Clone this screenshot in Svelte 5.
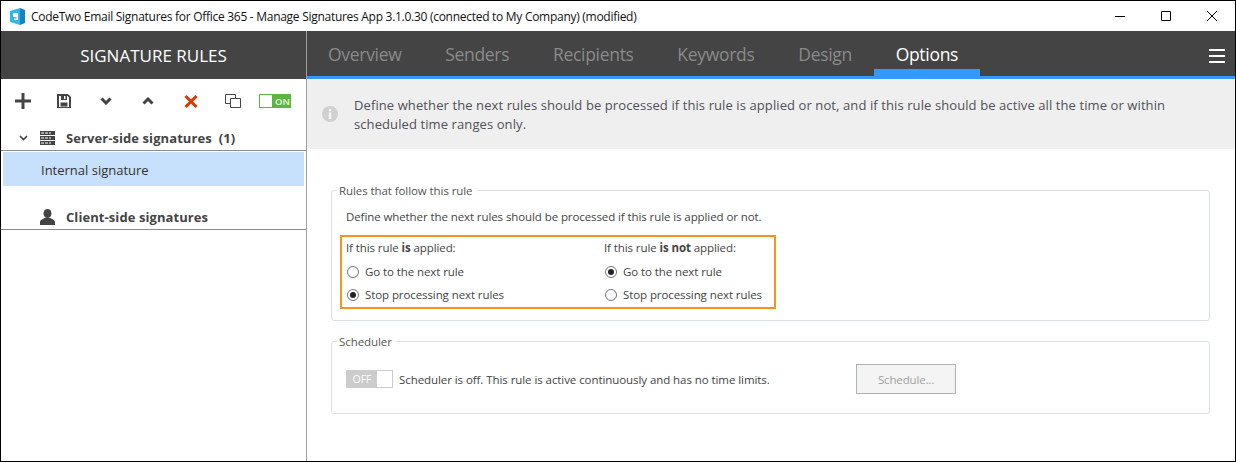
<script>
  const tabs = ['Overview', 'Senders', 'Recipients', 'Keywords', 'Design', 'Options'];
</script>

<div class="window">
  <header class="titlebar">
    <svg class="logo" width="15" height="17" viewBox="0 0 15 17">
      <path d="M0 3L10 0V17L0 14z" fill="#2fb6ea"/>
      <path d="M10 0L15 2V15L10 17z" fill="#1583bd"/>
      <path d="M3 5h5v7H4v-1.500h2.500V9H3z" fill="#fff"/>
    </svg>
    <span class="title">CodeTwo Email Signatures for Office 365 - Manage Signatures App 3.1.0.30 (connected to My Company) (modified)</span>
    <div class="winbtns">
      <svg width="12" height="12" viewBox="0 0 12 12"><path d="M1 6.500h10" stroke="#000" fill="none"/></svg>
      <svg width="12" height="12" viewBox="0 0 12 12"><path d="M1.500 1.500h9v9h-9z" stroke="#000" fill="none"/></svg>
      <svg width="12" height="12" viewBox="0 0 12 12"><path d="M1 1l10 10M11 1L1 11" stroke="#000" fill="none"/></svg>
    </div>
  </header>

  <div class="body">
    <aside class="side">
      <div class="side-head">SIGNATURE RULES</div>
      <div class="toolbar">
        <svg width="16" height="16" viewBox="0 0 16 16"><path d="M6.500 0h3v6.500h6.500v3H9.500V16h-3V9.500H0v-3h6.500z" fill="#444"/></svg>
        <svg width="14" height="14" viewBox="0 0 14 14"><path d="M0 0h11l3 3v11H0zM2 2v11h10V3.500L10.500 2H10v4H4V2zM7 2v3h1.500V2zM3.500 8.500v4h7v-4z" fill="#444" fill-rule="evenodd"/></svg>
        <svg width="12" height="8" viewBox="0 0 12 8"><path d="M1.500 1.500L6 6l4.500-4.500" stroke="#444" stroke-width="3" fill="none"/></svg>
        <svg width="12" height="8" viewBox="0 0 12 8"><path d="M1.500 6.500L6 2l4.500 4.500" stroke="#444" stroke-width="3" fill="none"/></svg>
        <svg width="14" height="13" viewBox="0 0 14 13"><path d="M1.500 1l11 11M12.500 1l-11 11" stroke="#d83b01" stroke-width="3" fill="none"/></svg>
        <svg width="16" height="14" viewBox="0 0 16 14"><path d="M.5.500h10v9H.5z" stroke="#444" fill="#fff"/><path d="M5.500 4.500h10v9h-10z" stroke="#444" fill="#fff"/></svg>
        <div class="on"><span class="knob"></span><span class="on-label">ON</span></div>
      </div>

      <div class="tree-head first">
        <svg class="chev" width="9" height="6" viewBox="0 0 9 6"><path d="M1 1l3.500 3.500L8 1" stroke="#444" stroke-width="1.600" fill="none"/></svg>
        <svg class="ticon" width="15" height="14" viewBox="0 0 15 14"><path d="M0 0h15v4H0zM0 5h15v4H0zM0 10h15v4H0z" fill="#444"/><path d="M1 1.500h3v1H1zM5 1.500h3v1H5zM9 1.500h2v1H9zM1 6.500h3v1H1zM5 6.500h3v1H5zM9 6.500h2v1H9zM1 11.500h3v1H1zM5 11.500h3v1H5zM9 11.500h2v1H9z" fill="#fff"/></svg>
        <span>Server-side signatures&nbsp; (1)</span>
      </div>
      <div class="selected">Internal signature</div>
      <div class="tree-head second">
        <svg class="ticon" width="15" height="16" viewBox="0 0 15 16"><ellipse cx="7.500" cy="4.500" rx="4" ry="4.500" fill="#444"/><path d="M0 16v-3c0-2 3-3 4.500-4h6c1.500 1 4.500 2 4.500 4v3z" fill="#444"/></svg>
        <span>Client-side signatures</span>
      </div>
    </aside>

    <main class="main">
      <nav class="tabs">
        {#each tabs as t}
          <div class="tab" class:active={t === 'Options'}>{t}</div>
        {/each}
        <div class="burger"><i></i><i></i><i></i></div>
      </nav>

      <div class="info">
        <svg width="16" height="16" viewBox="0 0 16 16"><circle cx="8" cy="8" r="8" fill="#d0d0d0"/><path d="M6.800 3h2.400v2.200H6.800zM6.800 6.500h2.400V13H6.800z" fill="#f4f4f4"/></svg>
        <p>Define whether the next rules should be processed if this rule is applied or not, and if this rule should be active all the time or within scheduled time ranges only.</p>
      </div>

      <div class="content">
        <section class="group one">
          <div class="legend">Rules that follow this rule</div>
          <p class="desc">Define whether the next rules should be processed if this rule is applied or not.</p>
          <div class="orange">
            <div class="col">
              <div class="col-head">If this rule <b>is</b> applied:</div>
              <div class="radio"><span class="dot"></span>Go to the next rule</div>
              <div class="radio"><span class="dot checked"></span>Stop processing next rules</div>
            </div>
            <div class="col">
              <div class="col-head">If this rule <b>is not</b> applied:</div>
              <div class="radio"><span class="dot checked"></span>Go to the next rule</div>
              <div class="radio"><span class="dot"></span>Stop processing next rules</div>
            </div>
          </div>
        </section>

        <section class="group two">
          <div class="legend">Scheduler</div>
          <div class="off"><span class="off-label">OFF</span><span class="off-knob"></span></div>
          <span class="sched-text">Scheduler is off. This rule is active continuously and has no time limits.</span>
          <button class="sched" disabled>Schedule...</button>
        </section>
      </div>
    </main>
  </div>
</div>

<style>
  :global(body) { margin: 0; background: #fff; }
  .window {
    box-sizing: border-box;
    width: 1236px;
    height: 462px;
    border: 1px solid #000;
    display: flex;
    flex-direction: column;
    overflow: hidden;
    font-family: "Open Sans", "Noto Sans", sans-serif;
    font-size: 12px;
    color: #444;
  }
  .titlebar {
    height: 30px;
    flex: none;
    display: flex;
    align-items: center;
    background: #fff;
    color: #111;
    padding-left: 9px;
  }
  .logo { margin-right: 6px; }
  .title { font-size: 12px; letter-spacing: -0.28px; }
  .winbtns { margin-left: auto; display: flex; gap: 34px; margin-right: 17px; }
  .body { flex: 1; display: flex; min-height: 0; }
  .side {
    width: 305px;
    flex: none;
    border-right: 1px solid #a0a0a0;
    display: flex;
    flex-direction: column;
  }
  .side-head {
    height: 48px;
    flex: none;
    background: #444;
    color: #fff;
    font-size: 17px;
    display: flex;
    align-items: center;
    justify-content: center;
  }
  .toolbar {
    height: 44px;
    flex: none;
    display: flex;
    align-items: center;
    padding-left: 14px;
    box-sizing: border-box;
  }
  .toolbar svg:nth-child(1) { margin-right: 26px; }
  .toolbar svg:nth-child(2) { margin-right: 29px; }
  .toolbar svg:nth-child(3) { margin-right: 30px; }
  .toolbar svg:nth-child(4) { margin-right: 30px; }
  .toolbar svg:nth-child(5) { margin-right: 27px; }
  .toolbar svg:nth-child(6) { margin-right: 18px; }
  .on {
    width: 32px;
    height: 14px;
    box-sizing: border-box;
    border: 1px solid #5cb83c;
    background: #5cb83c;
    display: flex;
    align-items: center;
  }
  .knob { width: 12px; height: 12px; background: #fff; flex: none; }
  .on-label { color: #e8f6e2; font-size: 9.5px; font-weight: 600; margin-left: 3px; }
  .tree-head {
    display: flex;
    align-items: center;
    border-bottom: 1px solid #8c8c8c;
    font-weight: 700;
    font-size: 13px;
    letter-spacing: 0.08px;
    color: #444;
    box-sizing: border-box;
  }
  .tree-head.first { height: 28px; padding-top: 2px; }
  .tree-head.second { height: 27px; margin-top: 17px; padding: 1px 0 0 39px; }
  .chev { margin-left: 18px; margin-right: 12px; }
  .ticon { margin-right: 11px; }
  .selected {
    height: 34px;
    box-sizing: border-box;
    margin: 1px 2px 0 2px;
    background: #c7e0fb;
    color: #333;
    font-size: 13px;
    padding: 2px 0 0 38px;
    display: flex;
    align-items: center;
  }
  .main { flex: 1; display: flex; flex-direction: column; min-width: 0; }
  .tabs {
    height: 48px;
    flex: none;
    box-sizing: border-box;
    background: #444;
    border-bottom: 3px solid #3399ff;
    display: flex;
    position: relative;
  }
  .tab {
    color: #8a8a8a;
    font-size: 17.5px;
    letter-spacing: -0.3px;
    padding: 1px 21px 0;
    height: 45px;
    box-sizing: border-box;
    display: flex;
    align-items: center;
    margin-right: 1.7px;
  }
  .tab.active {
    color: #fff;
    border-bottom: 7px solid #3399ff;
    padding: 8px 22px 0;
    margin-left: -1px;
  }
  .burger {
    margin-left: auto;
    margin-right: 10px;
    align-self: center;
    display: flex;
    flex-direction: column;
    gap: 4px;
    margin-top: 4px;
  }
  .burger i { display: block; width: 16px; height: 2px; background: #fff; }
  .info {
    height: 70px;
    flex: none;
    background: #efefef;
    display: flex;
    align-items: center;
    box-sizing: border-box;
    padding-left: 15px;
    color: #50505a;
  }
  .info svg { flex: none; margin-right: 16px; }
  .info p { margin: 2px 0 0; font-size: 13px; letter-spacing: 0.095px; line-height: 19px; width: 830px; }
  .content { flex: 1; padding: 41px 25px 0 24px; display: flex; flex-direction: column; gap: 20px; }
  .group {
    position: relative;
    border: 1px solid #d9dfe5;
    border-radius: 3px;
    box-sizing: border-box;
  }
  .group.one { height: 131px; padding: 18px 0 0 8px; }
  .group.two { height: 73px; display: flex; align-items: center; padding: 3px 0 0 14px; }
  .legend {
    position: absolute;
    top: -8px;
    left: 5px;
    background: #fff;
    padding: 0 4px 0 2px;
    font-size: 11.5px;
    line-height: 15px;
    letter-spacing: -0.08px;
    color: #555;
  }
  .desc { margin: 0 0 0 6px; font-size: 11.5px; line-height: 16px; letter-spacing: -0.09px; }
  .orange {
    box-sizing: border-box;
    width: 436px;
    height: 74px;
    margin-top: 10px;
    border: 2px solid #f7941d;
    display: flex;
    padding: 2px 0 0 4px;
  }
  .col { width: 258px; flex: none; }
  .col-head { font-size: 11.5px; letter-spacing: -0.09px; line-height: 17px; height: 21px; }
  .radio { display: flex; align-items: center; height: 23px; font-size: 11.5px; letter-spacing: -0.09px; }
  .dot {
    width: 12px;
    height: 12px;
    box-sizing: border-box;
    border: 1px solid #777;
    border-radius: 50%;
    margin: 0 6px 0 1px;
    flex: none;
    background: #fff;
    position: relative;
  }
  .dot.checked::after {
    content: "";
    position: absolute;
    inset: 2px;
    background: #222;
    border-radius: 50%;
  }
  .off {
    width: 47px;
    height: 18px;
    box-sizing: border-box;
    border: 1px solid #ccc;
    display: flex;
    flex: none;
    background: #fff;
  }
  .off-label { width: 30px; background: #ccc; color: #fff; font-size: 10.5px; font-weight: 400; display: flex; align-items: center; justify-content: center; }
  .off-knob { flex: 1; }
  .sched-text { margin-left: 6px; font-size: 11.5px; letter-spacing: -0.07px; width: 451px; flex: none; }
  .sched {
    width: 100px;
    height: 30px;
    margin: 0 0 0 6px;
    background: #f4f4f4;
    border: 1px solid #adb2b5;
    color: #a0a0a0;
    font: inherit;
    font-size: 11.5px;
    letter-spacing: -0.16px;
    padding: 0;
  }
</style>
